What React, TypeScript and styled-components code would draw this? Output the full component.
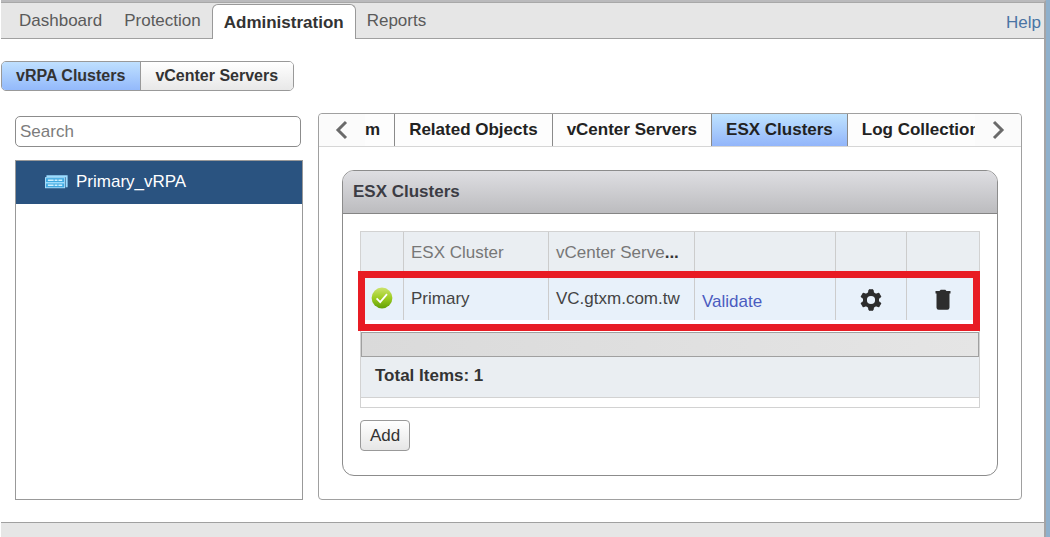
import React from "react";
import styled, { createGlobalStyle, css } from "styled-components";

const GlobalStyle = createGlobalStyle`
  *, *::before, *::after { box-sizing: border-box; }
  body {
    margin: 0;
    background: #fff;
    color: #333;
    font: 17px/20px "Liberation Sans", Arial, sans-serif;
  }
  button, input { font: inherit; color: inherit; }
`;

const Shell = styled.div`
  display: flex;
  flex-direction: column;
  min-height: 100vh;
  padding-left: 1px;
  border-right: 4px solid #8fb0cc;
`;

const Frame = styled.div`
  flex: 1;
  display: flex;
  flex-direction: column;
  border-top: 2px solid #bababc;
  border-right: 2px solid #a4a4a6;
`;

const TopBar = styled.header`
  display: flex;
  align-items: flex-end;
  height: 37px;
  padding-right: 3px;
  border-top: 1px solid #a8a8a8;
  background: #e6e6e6;
  box-shadow: inset 0 -1px #a0a0a0;
`;

const MainNav = styled.nav`
  display: flex;
  align-items: flex-end;
  flex: 1;
  padding-left: 7px;
`;

const NavLink = styled.a<{ $active?: boolean }>`
  height: 35px;
  padding: 7px 11px;
  color: #5a5a5a;
  text-decoration: none;
  ${(p) =>
    p.$active &&
    css`
      padding: 8px 11px;
      border: 1px solid #999;
      border-bottom: 0;
      border-radius: 6px 6px 0 0;
      background: #fff;
      color: #333;
      font-weight: bold;
    `}
`;

const HelpLink = styled.a`
  height: 35px;
  padding: 9px 0;
  color: #4a74a4;
  text-decoration: none;
`;

const Content = styled.main`
  flex: 1;
  display: flex;
  flex-direction: column;
  padding-bottom: 22px;
`;

const Segments = styled.div`
  display: flex;
  align-self: flex-start;
  margin-top: 22px;
  overflow: hidden;
  border: 1px solid #999;
  border-radius: 5px;
`;

const Segment = styled.button<{ $active?: boolean }>`
  height: 28px;
  padding: 0 15px 0 14px;
  border: 0;
  background: ${(p) => (p.$active ? "linear-gradient(#bfe0ff, #93b9fb)" : "linear-gradient(#fff, #e8e8e8)")};
  font-size: 16px;
  font-weight: bold;
  & + & {
    border-left: 1px solid #999;
  }
`;

const Columns = styled.div`
  flex: 1;
  display: flex;
  gap: 15px;
  margin-top: 22px;
  padding: 0 22px 0 14px;
`;

const Sidebar = styled.aside`
  display: flex;
  flex-direction: column;
  flex: 0 0 288px;
  gap: 13px;
  padding-top: 3px;
`;

const SearchInput = styled.input`
  height: 31px;
  margin-right: 2px;
  padding: 0 4px;
  border: 1px solid #8c8c8c;
  border-radius: 5px;
  outline: 0;
  &::placeholder {
    color: #7c7c7c;
    opacity: 1;
  }
`;

const ClusterList = styled.ul`
  flex: 1;
  margin: 0;
  padding: 0;
  border: 1px solid #999;
  list-style: none;
`;

const ClusterItem = styled.li`
  display: flex;
  align-items: center;
  gap: 8px;
  height: 43px;
  padding: 0 29px 2px;
  background: #2a5380;
  color: #fff;
`;

const Panel = styled.section`
  flex: 1;
  min-width: 0;
  display: flex;
  flex-direction: column;
  border: 1px solid #a0a0a0;
  border-radius: 4px;
`;

const TabStrip = styled.div`
  display: flex;
  height: 33px;
  border-bottom: 1px solid #d6d6d6;
  background: #fbfbfb;
  border-radius: 4px 4px 0 0;
`;

const ScrollButton = styled.button`
  display: flex;
  align-items: center;
  justify-content: center;
  width: 46px;
  padding: 0;
  border: 0;
  background: none;
  color: #6a6a6a;
`;

const TabList = styled.div`
  flex: 1;
  min-width: 0;
  display: flex;
  overflow: hidden;
`;

const Tab = styled.button<{ $active?: boolean }>`
  flex: none;
  padding: 0 14px;
  border: 0;
  border-left: 1px solid #8a8a8a;
  background: ${(p) => (p.$active ? "linear-gradient(#bfe3ff, #92b5fa)" : "#fdfdfd")};
  color: #222;
  font-weight: bold;
  white-space: nowrap;
  &:first-child {
    padding-left: 0;
    border-left: 0;
  }
`;

const Card = styled.section`
  flex: 1;
  margin: 23px;
  overflow: hidden;
  border: 1px solid #8c8c8c;
  border-radius: 12px;
`;

const CardTitle = styled.h2`
  margin: 0;
  padding: 11px 10px;
  border-bottom: 1px solid #858585;
  background: linear-gradient(#dedee2, #bcbcbf);
  color: #3c3c44;
  font-size: 17px;
  line-height: 20px;
`;

const CardBody = styled.div`
  padding: 17px;
`;

const Grid = styled.div`
  position: relative;
  border: 1px solid #d2d2d2;
`;

const Table = styled.table`
  width: 100%;
  table-layout: fixed;
  border-collapse: separate;
  border-spacing: 0;
`;

const Col = styled.col<{ $width?: number }>`
  width: ${(p) => (p.$width ? `${p.$width}px` : "auto")};
`;

const cell = css`
  padding: 0 7px;
  border-right: 1px solid #ccc;
  text-align: left;
  white-space: nowrap;
  &:last-child {
    border-right: 0;
  }
`;

const HeadCell = styled.th`
  ${cell}
  height: 42px;
  background: #eaeef2;
  color: #777;
  font-weight: normal;
`;

const Ellipsis = styled.span`
  color: #333;
  font-weight: bold;
`;

const Cell = styled.td<{ $icon?: boolean }>`
  ${cell}
  height: 46px;
  padding-top: 3px;
  background: #e8f1fa;
  color: #444;
  ${(p) =>
    p.$icon &&
    css`
      padding: 6px 0 0;
      text-align: center;
    `}
`;

const ValidateLink = styled.a`
  display: block;
  padding-top: 6px;
  color: #4a5cc0;
  text-decoration: none;
`;

const IconButton = styled.button`
  display: inline-flex;
  padding: 0;
  border: 0;
  background: none;
  color: #2d2d2d;
  vertical-align: middle;
`;

const RowHighlight = styled.div`
  position: absolute;
  top: 39px;
  left: -3px;
  right: -1px;
  height: 60px;
  border: 7px solid #e81c24;
  pointer-events: none;
`;

const ScrollTrack = styled.div`
  height: 25px;
  margin-top: 12px;
  border: 1px solid #a0a0a0;
  background: linear-gradient(90deg, #dadada, #e5e5e5);
`;

const Totals = styled.div`
  height: 41px;
  margin-bottom: 9px;
  padding: 9px 14px;
  border-bottom: 1px solid #d2d2d2;
  background: #eaeef2;
  font-weight: bold;
`;

const AddButton = styled.button`
  height: 31px;
  margin-top: 12px;
  padding: 0 9px;
  border: 1px solid #999;
  border-radius: 4px;
  background: linear-gradient(#fff, #e6e6e6);
`;

const Footer = styled.footer`
  height: 15px;
  border-top: 1px solid #a0a0a0;
  background: #e6e6e6;
`;

const Chevron = ({ points }: { points: string }) => (
  <svg width="14" height="20" viewBox="0 0 14 20" fill="none" stroke="currentColor" strokeWidth="3" aria-hidden="true">
    <polyline points={points} />
  </svg>
);

const ClusterIcon = () => (
  <svg width="23" height="14" viewBox="0 0 24 14" aria-hidden="true">
    <path d="M1.5 1H22.6V12.5" fill="none" stroke="#9bdcff" strokeWidth="2" />
    <rect x="0.5" y="2.5" width="20" height="10.5" fill="#3fa8e0" stroke="#a8e0ff" />
    <path d="M1 7.8h19" stroke="#a8e0ff" strokeWidth="1.4" />
    <path d="M3 5.2h6M10 5.2h3M14 5.2h4M3 10.4h6M10 10.4h3M14 10.4h4" stroke="#d0f0ff" strokeWidth="1.4" />
  </svg>
);

const StatusOk = () => (
  <svg width="22" height="22" viewBox="0 0 22 22" role="img" aria-label="OK">
    <defs>
      <linearGradient id="ok-fill" x1="0" y1="0" x2="0" y2="1">
        <stop offset="0" stopColor="#cbe36c" />
        <stop offset="0.5" stopColor="#9dcc22" />
        <stop offset="1" stopColor="#62a006" />
      </linearGradient>
    </defs>
    <circle cx="11" cy="11" r="10.4" fill="url(#ok-fill)" />
    <path d="M5.6 11.4l3.6 3.8 6.8-8" fill="none" stroke="#fff" strokeWidth="1.8" />
  </svg>
);

const GearIcon = () => (
  <svg width="26" height="26" viewBox="0 0 26 26" aria-hidden="true">
    <circle cx="13" cy="13" r="6.1" fill="none" stroke="currentColor" strokeWidth="4" />
    {[0, 60, 120, 180, 240, 300].map((angle) => (
      <path key={angle} d="M10.4 6.6L11 2.8h4l.6 3.8z" fill="currentColor" stroke="currentColor" strokeLinejoin="round" transform={`rotate(${angle} 13 13)`} />
    ))}
  </svg>
);

const TrashIcon = () => (
  <svg width="26" height="26" viewBox="0 0 26 26" fill="currentColor" aria-hidden="true">
    <path d="M5.5 4h4l1.2-1.2h4.6L16.500 4h4v2.400h-15z" />
    <path d="M6.500 6h13v14.600a2.200 2.200 0 0 1-2.200 2.200H8.700a2.200 2.200 0 0 1-2.200-2.200z" />
  </svg>
);

const tabs = ["m", "Related Objects", "vCenter Servers", "ESX Clusters", "Log Collection"];
const navItems = ["Dashboard", "Protection", "Administration", "Reports"];

export default function App() {
  return (
    <Shell>
      <GlobalStyle />
      <Frame>
        <TopBar>
          <MainNav>
            {navItems.map((item) => (
              <NavLink key={item} href="#" $active={item === "Administration"}>
                {item}
              </NavLink>
            ))}
          </MainNav>
          <HelpLink href="#">Help</HelpLink>
        </TopBar>
        <Content>
          <Segments>
            <Segment $active>vRPA Clusters</Segment>
            <Segment>vCenter Servers</Segment>
          </Segments>
          <Columns>
            <Sidebar>
              <SearchInput type="text" placeholder="Search" aria-label="Search" />
              <ClusterList>
                <ClusterItem>
                  <ClusterIcon />
                  Primary_vRPA
                </ClusterItem>
              </ClusterList>
            </Sidebar>
            <Panel>
              <TabStrip>
                <ScrollButton aria-label="Previous tabs">
                  <Chevron points="11,2 3,10 11,18" />
                </ScrollButton>
                <TabList role="tablist">
                  {tabs.map((tab) => (
                    <Tab key={tab} role="tab" aria-selected={tab === "ESX Clusters"} $active={tab === "ESX Clusters"}>
                      {tab}
                    </Tab>
                  ))}
                </TabList>
                <ScrollButton aria-label="Next tabs">
                  <Chevron points="3,2 11,10 3,18" />
                </ScrollButton>
              </TabStrip>
              <Card>
                <CardTitle>ESX Clusters</CardTitle>
                <CardBody>
                  <Grid>
                    <Table>
                      <colgroup>
                        <Col $width={43} />
                        <Col $width={145} />
                        <Col $width={146} />
                        <Col />
                        <Col $width={71} />
                        <Col $width={72} />
                      </colgroup>
                      <thead>
                        <tr>
                          <HeadCell />
                          <HeadCell>ESX Cluster</HeadCell>
                          <HeadCell>
                            vCenter Serve<Ellipsis>...</Ellipsis>
                          </HeadCell>
                          <HeadCell />
                          <HeadCell />
                          <HeadCell />
                        </tr>
                      </thead>
                      <tbody>
                        <tr>
                          <Cell $icon>
                            <StatusOk />
                          </Cell>
                          <Cell>Primary</Cell>
                          <Cell>VC.gtxm.com.tw</Cell>
                          <Cell>
                            <ValidateLink href="#">Validate</ValidateLink>
                          </Cell>
                          <Cell $icon>
                            <IconButton aria-label="Settings">
                              <GearIcon />
                            </IconButton>
                          </Cell>
                          <Cell $icon>
                            <IconButton aria-label="Delete">
                              <TrashIcon />
                            </IconButton>
                          </Cell>
                        </tr>
                      </tbody>
                    </Table>
                    <RowHighlight />
                    <ScrollTrack />
                    <Totals>Total Items: 1</Totals>
                  </Grid>
                  <AddButton>Add</AddButton>
                </CardBody>
              </Card>
            </Panel>
          </Columns>
        </Content>
        <Footer />
      </Frame>
    </Shell>
  );
}
